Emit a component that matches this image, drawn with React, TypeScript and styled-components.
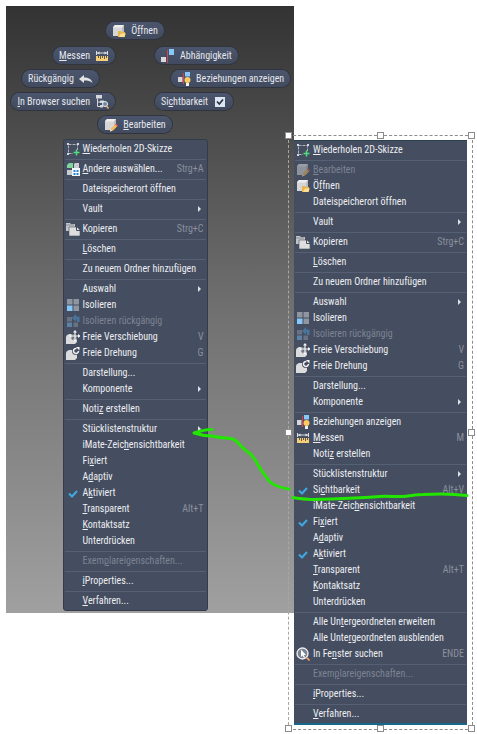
import React, { useId } from "react";
import styled, { createGlobalStyle, css } from "styled-components";

const GlobalStyle = createGlobalStyle`
  body {
    margin: 0;
    background: #ffffff;
  }
  *, *::before, *::after { box-sizing: border-box; }
  body, button, input {
    font-family: "Roboto Condensed", "DejaVu Sans Condensed", Roboto, sans-serif;
    font-size: 10px;
    line-height: 16px;
  }
`;

const Page = styled.main`
  display: grid;
  grid-template-columns: minmax(0, 288fr) minmax(0, 179fr);
  align-items: start;
  padding: 6px 4px 4px 6px;
`;

const Canvas = styled.section`
  display: flex;
  flex-direction: column;
  align-items: center;
  padding: 16px 30px 2px 0;
  background: linear-gradient(#333333, #707070 50%, #a0a0a0);
`;

const MarkingMenu = styled.div`
  align-self: stretch;
  display: grid;
  gap: 6px;
  margin-bottom: 6px;
`;

const PillRow = styled.div<{ $gap?: number; $below?: number }>`
  display: grid;
  grid-template-columns: ${p => (p.$gap ? "minmax(0, 1fr) minmax(0, 1fr)" : "auto")};
  justify-content: ${p => (p.$gap ? "stretch" : "center")};
  column-gap: ${p => p.$gap ?? 0}px;
  margin-bottom: ${p => p.$below ?? 0}px;
  & > :first-child { justify-self: end; }
  & > :last-child:not(:first-child) { justify-self: start; }
`;

const pillStyle = css`
  display: flex;
  align-items: center;
  gap: 5px;
  height: 17px;
  padding: 0 6px;
  border: 0;
  border-radius: 9px;
  background: linear-gradient(#4b566e, #414a5e);
  box-shadow: 0 0 0 1px #2f343f;
  color: #e6e8ec;
  white-space: nowrap;
`;
const Pill = styled.button`${pillStyle}`;
const PillLabel = styled.label`${pillStyle}`;

const CheckSlot = styled.span`
  display: grid;
  flex: none;
  width: 14px;
  height: 14px;
  & > * { grid-area: 1 / 1; }
`;

const PillCheck = styled.input`
  appearance: none;
  width: 10px;
  height: 10px;
  margin: 2px;
  background: #dbe6f2;
  &:not(:checked) + svg { visibility: hidden; }
`;

const MenuCheck = styled.input`
  appearance: none;
  width: 14px;
  height: 14px;
  margin: 0;
  &:not(:checked) + svg { visibility: hidden; }
`;

const MenuPanel = styled.div<{ $framed?: boolean }>`
  display: flex;
  flex-direction: column;
  min-width: 145px;
  padding: 1px 0;
  background: #454d60;
  ${p =>
    p.$framed
      ? css`
          border-top: 1px solid #26414c;
          border-bottom: 2px solid #16688c;
        `
      : css`
          border: 1px solid #343b4a;
          border-radius: 3px;
        `}
`;

const itemStyle = css`
  display: flex;
  align-items: center;
  gap: 3px;
  height: 16px;
  padding: 0 3px 0 2px;
  border: 0;
  background: transparent;
  color: #eceef1;
  text-align: left;
  white-space: nowrap;
`;
const Item = styled.button`
  ${itemStyle}
  &:disabled { color: #7c8494; }
  &:disabled svg { opacity: 0.5; }
`;
const CheckItem = styled.label`${itemStyle}`;

const ItemText = styled.span`
  flex: 1;
`;

const Shortcut = styled.kbd`
  font: inherit;
  color: #8a909d;
`;

const Arrow = styled.span`
  margin-right: 3px;
  border: 3px solid transparent;
  border-left-color: #dde1e8;
  border-right-width: 0;
`;

const Separator = styled.hr`
  height: 1px;
  margin: 2px 1px 1px;
  border: 0;
  background: #556074;
`;

const IconSvg = styled.svg`
  flex: none;
  display: block;
  width: 14px;
  height: 14px;
`;

const Selection = styled.section`
  position: relative;
  margin: 129px 0 0 -6px;
  padding: 4px 5px;
  border: 1px dashed #8c8c8c;
  border-left-color: #a6a6a6;
`;

const Handle = styled.span<{ $x: number; $y: number }>`
  position: absolute;
  left: ${p => p.$x}%;
  top: ${p => p.$y}%;
  width: 7px;
  height: 7px;
  margin: -4px;
  border: 1px solid #8c8c8c;
  background: #ffffff;
`;

const Scribble = styled.svg`
  position: absolute;
  left: -99px;
  top: 290px;
  width: 290px;
  height: 76px;
  pointer-events: none;
`;

type IconName =
  | "sketch" | "select" | "copy" | "isolate" | "unisolate" | "move" | "rotate"
  | "open" | "edit" | "relations" | "measure" | "constraint" | "undo"
  | "browser" | "find" | "check" | "darkCheck";

const cube = (
  <>
    <path d="M1 3 3 1h9v8l-3 3H1z" fill="#d6d6d6" />
    <path d="M1 3.500 3 1h9l-2 2.500z" fill="#eeeeee" />
    <path d="M10 3.500 12 1v8l-2 2.500z" fill="#bcbcbc" />
  </>
);
const roundCube = (
  <path d="M0 7q0-2 3-3h5l3 3v5l-2 2H0z" fill="#dcdcdc" />
);

const drawings: Record<IconName, React.ReactNode> = {
  sketch: (
    <>
      <path d="M2.500 2.500h9v9h-9z" fill="none" stroke="#aeb3bd" strokeDasharray="3 1" />
      <path d="M1 1h2v2H1zM11 1h2v2h-2zM1 11h2v2H1z" fill="#d5d8dd" />
      <path d="M7 8h7v6H7z" fill="#454d60" />
      <path d="M10.500 7.500v6M7.500 10.500h6" stroke="#4fe07c" strokeWidth="1.500" />
    </>
  ),
  select: (
    <>
      <path d="M1 3 3 1h4v5H1z" fill="#7fd69c" />
      <path d="M8 2l1-1h4v5H8zM1 8h5v5H1z" fill="#c9cbcf" />
      <path d="M6 6h8v8H6z" fill="#f6f8fb" />
      <path d="M7.500 8h2v2h-2zM10.500 8h2v2h-2zM7.500 11h2v2h-2zM10.500 11h2v2h-2z" fill="#2f86d6" />
    </>
  ),
  copy: (
    <>
      <path d="M0 1h4l1 1h4v7H0z" fill="#c3c4c7" />
      <path d="M0 3h8" stroke="#8a8d94" />
      <path d="M3 5h8l3 3v6H3z" fill="#dedede" stroke="#454d60" strokeWidth=".6" />
      <path d="M10.500 4.500v4H14" fill="none" stroke="#454d60" />
    </>
  ),
  isolate: (
    <>
      <path d="M1 1h5.500v5.500H1zM7.500 1H13v5.500H7.500zM7.500 7.500H13V13H7.500z" fill="#9096a0" />
      <path d="M1 7.500h5.500V13H1z" fill="#86c8f8" />
    </>
  ),
  unisolate: (
    <>
      <path d="M1 3h5v4.500H1zM7.500 8.500H12V13H7.500z" fill="#9096a0" />
      <path d="M1 8.500h5V13H1z" fill="#74b8ea" />
      <path d="M6 4l4-4v2.500h3.500V8H11V5.500h-1V8z" fill="#4f9bd6" />
    </>
  ),
  move: (
    <>
      {roundCube}
      <circle cx="9" cy="6" r="4.500" fill="#454d60" opacity=".7" />
      <path d="M9 1v10M4 6h10" stroke="#f5f5f5" strokeWidth="1.200" />
      <path d="M9 0l2 2.500H7zM9 12l2-2.500H7zM3 6l2.500-2v4zM14.500 6 12 4v4z" fill="#f5f5f5" />
    </>
  ),
  rotate: (
    <>
      {roundCube}
      <circle cx="10" cy="5" r="4" fill="#454d60" />
      <path d="M10.500 2.500a2.500 2.500 0 1 0 2 2.500" fill="none" stroke="#f5f5f5" strokeWidth="1.500" />
      <path d="M10 1h3.500v3.500z" fill="#f5f5f5" />
    </>
  ),
  open: (
    <>
      {cube}
      <path d="M6 7h3l1 1h3v5H6z" fill="#e9b64d" />
      <path d="M7 13l2-3.500h5L12 13z" fill="#ffdf94" />
    </>
  ),
  edit: (
    <>
      {cube}
      <path d="M6 13.500l1-3L11.500 6l2 2L9 12.500z" fill="#f2bd55" />
      <path d="M11 6.500l1-1 2 2-1 1z" fill="#e2585a" />
      <path d="M6 13.500l.7-2 1.300 1.300z" fill="#ffffff" />
    </>
  ),
  relations: (
    <>
      <path d="M1 5h4.500v5H1z" fill="#d5d7db" />
      <path d="M6.500 1v11" stroke="#d8434b" strokeWidth="1.200" />
      <path d="M8 0h5v4.500H8z" fill="#86c8f8" />
      <circle cx="10.500" cy="8" r="3" fill="#fccb62" />
      <path d="M9 11h3v3H9z" fill="#eef0f3" />
    </>
  ),
  measure: (
    <>
      <path d="M1.500 2v4M12.500 2v4M2 4h10" stroke="#dfe1e5" />
      <path d="M2 4 4.500 2.500v3zM12 4 9.500 2.500v3z" fill="#dfe1e5" />
      <path d="M1 7h12v5H1z" fill="#f6cf78" />
      <path d="M3.500 7v2M5.500 7v3M7.500 7v2M9.500 7v3M11.500 7v2" stroke="#60584a" />
    </>
  ),
  constraint: (
    <>
      <path d="M0 8h5v5H0z" fill="#d8d9dc" />
      <path d="M6.500 1v13" stroke="#d8434b" />
      <path d="M8 0h5v6H8z" fill="#86c8f8" />
    </>
  ),
  undo: <path d="M0 7l5-4v2.500c4.500 0 7.500 1.500 8.500 5.500C11.500 9 9 8.500 5 8.500V11z" fill="#e3e4e6" />,
  browser: (
    <>
      <path d="M1 0h6v3.500H1z" fill="#d5d7db" />
      <path d="M2.500 3.500v8H6M2.500 7H6" fill="none" stroke="#d5d7db" />
      <path d="M5 5.500h4V8H5zM5 10h3v2.500H5z" fill="#d5d7db" />
      <circle cx="10" cy="9" r="2.500" fill="#6b87a4" stroke="#eef0f3" />
      <path d="M11.500 11l2 2.500" stroke="#f0b45e" strokeWidth="1.500" />
    </>
  ),
  find: (
    <>
      <circle cx="6.500" cy="6.500" r="5.500" fill="#7c8492" stroke="#eef0f3" strokeWidth="1.300" />
      <path d="M5 2.500v7.500l1.500-1.500 1.500 2.500 1-.7L7.800 8H10z" fill="#ffffff" />
      <path d="M10.500 10.500l3 3" stroke="#f0a860" strokeWidth="1.600" />
    </>
  ),
  check: <path d="M3 7.500l3 3L11 5" fill="none" stroke="#3fa9e0" strokeWidth="2" />,
  darkCheck: <path d="M4 6.500l2.300 2.500L10 4.500" fill="none" stroke="#28303e" strokeWidth="1.600" />,
};

const Icon = ({ name }: { name?: IconName }) => (
  <IconSvg viewBox="0 0 14 14" aria-hidden="true">{name && drawings[name]}</IconSvg>
);

/* An ampersand stands before the access key of a label. */
const Label = ({ text }: { text: string }) => {
  const at = text.indexOf("&");
  if (at < 0) return <>{text}</>;
  return <>{text.slice(0, at)}<u>{text[at + 1]}</u>{text.slice(at + 2)}</>;
};

interface Entry {
  text: string;
  icon?: IconName;
  keys?: string;
  submenu?: boolean;
  disabled?: boolean;
  checked?: boolean;
}

const repeatSketch: Entry = { text: "&Wiederholen 2D-Skizze", icon: "sketch" };
const openLocation: Entry = { text: "Dateispeicherort öffnen" };
const vault: Entry[] = [{ text: "Vault", submenu: true }];
const editing: Entry[][] = [
  [{ text: "Kopieren", icon: "copy", keys: "Strg+C" }],
  [{ text: "&Löschen" }],
  [{ text: "Zu neuem Ordner hinzufügen" }],
  [
    { text: "Auswahl", submenu: true },
    { text: "Isolieren", icon: "isolate" },
    { text: "Isolieren rückgängig", icon: "unisolate", disabled: true },
    { text: "Freie Verschiebung", icon: "move", keys: "V" },
    { text: "Freie Drehung", icon: "rotate", keys: "G" },
  ],
  [{ text: "Darstellung..." }, { text: "Komponente", submenu: true }],
];
const note: Entry = { text: "Noti&z erstellen" };
const structure: Entry = { text: "Stücklistenstruktur", submenu: true };
const states = (fixed: boolean): Entry[] => [
  { text: "iMate-Zeic&hensichtbarkeit" },
  { text: "Fi&xiert", checked: fixed },
  { text: "A&daptiv", checked: false },
  { text: "A&ktiviert", checked: true },
  { text: "&Transparent", keys: "Alt+T" },
  { text: "&Kontaktsatz" },
  { text: "Unterdrücken" },
];
const closing: Entry[][] = [
  [{ text: "Exem&plareigenschaften...", disabled: true }],
  [{ text: "&iProperties..." }],
  [{ text: "&Verfahren..." }],
];

const shortMenu: Entry[][] = [
  [repeatSketch],
  [{ text: "&Andere auswählen...", icon: "select", keys: "Strg+A" }],
  [openLocation],
  vault,
  ...editing,
  [note],
  [structure, ...states(false)],
  ...closing,
];

const longMenu: Entry[][] = [
  [repeatSketch],
  [
    { text: "&Bearbeiten", icon: "edit", disabled: true },
    { text: "Ö&ffnen", icon: "open" },
    openLocation,
  ],
  vault,
  ...editing,
  [
    { text: "Beziehungen anzeigen", icon: "relations" },
    { text: "&Messen", icon: "measure", keys: "M" },
    note,
  ],
  [structure, { text: "Si&chtbarkeit", checked: true, keys: "Alt+V" }, ...states(true)],
  [
    { text: "Alle Un&tergeordneten erweitern" },
    { text: "Alle Unte&rgeordneten ausblenden" },
    { text: "In Fe&nster suchen", icon: "find", keys: "ENDE" },
  ],
  ...closing,
];

const MenuEntry = ({ entry }: { entry: Entry }) => {
  const id = useId();
  const body = (
    <>
      <ItemText><Label text={entry.text} /></ItemText>
      {entry.keys && <Shortcut>{entry.keys}</Shortcut>}
      {entry.submenu && <Arrow />}
    </>
  );
  if (entry.checked !== undefined) {
    return (
      <CheckItem htmlFor={id}>
        <CheckSlot>
          <MenuCheck id={id} type="checkbox" defaultChecked={entry.checked} />
          <Icon name="check" />
        </CheckSlot>
        {body}
      </CheckItem>
    );
  }
  return (
    <Item type="button" disabled={entry.disabled}>
      <Icon name={entry.icon} />
      {body}
    </Item>
  );
};

const ContextMenu = ({ groups, framed }: { groups: Entry[][]; framed?: boolean }) => (
  <MenuPanel $framed={framed}>
    {groups.map((group, i) => (
      <React.Fragment key={group[0].text}>
        {i > 0 && <Separator />}
        {group.map(entry => <MenuEntry key={entry.text} entry={entry} />)}
      </React.Fragment>
    ))}
  </MenuPanel>
);

const handles = [[0, 0], [50, 0], [100, 0], [0, 50], [100, 50], [0, 100], [50, 100], [100, 100]];

export default function App() {
  return (
    <>
      <GlobalStyle />
      <Page>
        <Canvas>
          <MarkingMenu>
            <PillRow $below={2}>
              <Pill><Icon name="open" /><span><Label text="Ö&ffnen" /></span></Pill>
            </PillRow>
            <PillRow $gap={40}>
              <Pill><span><Label text="&Messen" /></span><Icon name="measure" /></Pill>
              <Pill><Icon name="constraint" /><span>Abhängigkeit</span></Pill>
            </PillRow>
            <PillRow $gap={72}>
              <Pill><span>Rückgängig</span><Icon name="undo" /></Pill>
              <Pill><Icon name="relations" /><span>Beziehungen anzeigen</span></Pill>
            </PillRow>
            <PillRow $gap={40}>
              <Pill><span><Label text="&In Browser suchen" /></span><Icon name="browser" /></Pill>
              <PillLabel>
                <span><Label text="Si&chtbarkeit" /></span>
                <CheckSlot>
                  <PillCheck type="checkbox" defaultChecked />
                  <Icon name="darkCheck" />
                </CheckSlot>
              </PillLabel>
            </PillRow>
            <PillRow>
              <Pill><Icon name="edit" /><span><Label text="&Bearbeiten" /></span></Pill>
            </PillRow>
          </MarkingMenu>
          <ContextMenu groups={shortMenu} />
        </Canvas>
        <Selection>
          <ContextMenu groups={longMenu} framed />
          {handles.map(([x, y]) => <Handle key={`${x}-${y}`} $x={x} $y={y} />)}
          <Scribble viewBox="190 426 290 76" fill="none" stroke="#22e600" strokeWidth="3" strokeLinecap="round" strokeLinejoin="round" aria-hidden="true">
            <path d="M212 429.500C206 429 200 431 194 433C200 435 206 436 212 436C220 438 228 438 233 439C238 441 240 446 244 449C250 453 254 457 257 463C261 471 265 475 269 481C274 486 282 488 289 489" />
            <path d="M293 497.500C299 499 306 499 313 499.500C335 499 360 498 380 496.500C390 496 395 497 402 496.500C410 496 416 494.500 423 494.500C440 493.500 455 494 467 495.500" />
          </Scribble>
        </Selection>
      </Page>
    </>
  );
}
